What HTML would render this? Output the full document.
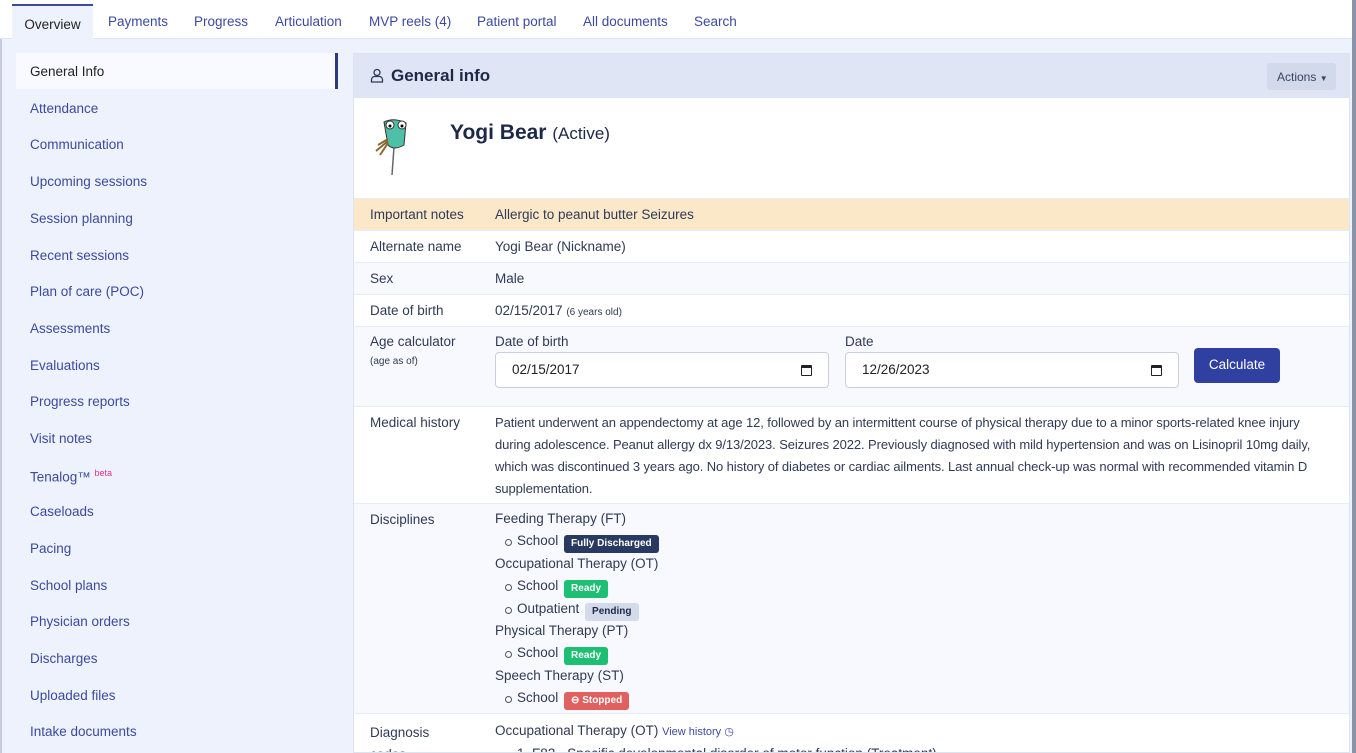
<!DOCTYPE html>
<html><head><meta charset="utf-8"><style>
*{box-sizing:border-box;margin:0;padding:0}
html,body{width:1356px;height:753px;overflow:hidden}
body{background:#edf2fc;font-family:"Liberation Sans",sans-serif;color:#2f3a55;font-size:14px;position:relative}
.topbar{position:absolute;left:0;top:0;width:1356px;height:39px;background:#fff;border-bottom:1px solid #dfe5f2}
.tab{position:absolute;top:14px;font-size:13.5px;color:#3b4aa0}
.tab.act{top:4px;left:12px;width:81px;height:36px;background:#edf2fc;border-top:2px solid #3b4aa0;color:#222;padding-top:11px;text-align:center}
.side{position:absolute;left:0;top:39px;width:340px;height:714px;border-left:2px solid #c6cbe0}
.si{position:absolute;left:30px;font-size:13.5px;color:#3b4aa0}
.siact{position:absolute;left:16px;top:53px;width:322px;height:36px;background:#f8faff;border-right:3px solid #2e3a7e}
.card{position:absolute;left:353px;top:53px;width:997px;height:700px;background:#fff;border:1px solid #dde3f0;overflow:hidden}
.hdr{position:absolute;left:0;top:0;width:100%;height:44px;background:#dfe5f5}
.row{position:absolute;left:0;width:100%;border-top:1px solid #e6ebf5}
.lbl{position:absolute;left:16px;font-size:13.5px;color:#2f3a55}
.val{position:absolute;left:141px;font-size:13.5px;color:#2f3a55}
.badge{display:inline-block;font-size:10px;line-height:14px;font-weight:bold;color:#fff;padding:2px 7px;border-radius:3px;vertical-align:-1px;margin-left:2px}
.li{position:relative;padding-left:22px;height:22.4px;line-height:22px}
.li:before{content:"";position:absolute;left:10px;top:9px;width:5px;height:5px;border:1px solid #555;border-radius:50%}
.inp{position:absolute;height:36px;border:1px solid #c9cfe0;border-radius:4px;background:#fff;font-size:13.5px;padding:9px 16px;color:#222}
.cal{position:absolute;right:16px;top:12px;width:11px;height:11px;border:1.5px solid #222;border-top-width:3px;border-radius:1px}
.right{position:absolute;left:1352px;top:0;width:4px;height:753px;background:#8b93a8}
</style></head><body>
<div class="topbar">
<div class="tab act">Overview</div>
<div class="tab" style="left:108px">Payments</div>
<div class="tab" style="left:194px">Progress</div>
<div class="tab" style="left:275px">Articulation</div>
<div class="tab" style="left:369px">MVP reels (4)</div>
<div class="tab" style="left:477px">Patient portal</div>
<div class="tab" style="left:583px">All documents</div>
<div class="tab" style="left:694px">Search</div>
</div>
<div class="side"></div>
<div class="siact"></div>
<div class="si" style="top:64px;color:#222">General Info</div>
<div class="si" style="top:101px">Attendance</div>
<div class="si" style="top:137px">Communication</div>
<div class="si" style="top:174px">Upcoming sessions</div>
<div class="si" style="top:211px">Session planning</div>
<div class="si" style="top:248px">Recent sessions</div>
<div class="si" style="top:284px">Plan of care (POC)</div>
<div class="si" style="top:321px">Assessments</div>
<div class="si" style="top:358px">Evaluations</div>
<div class="si" style="top:394px">Progress reports</div>
<div class="si" style="top:431px">Visit notes</div>
<div class="si" style="top:468px">Tenalog™ <sup style="color:#e0338a;font-size:9px">beta</sup></div>
<div class="si" style="top:504px">Caseloads</div>
<div class="si" style="top:541px">Pacing</div>
<div class="si" style="top:578px">School plans</div>
<div class="si" style="top:614px">Physician orders</div>
<div class="si" style="top:651px">Discharges</div>
<div class="si" style="top:688px">Uploaded files</div>
<div class="si" style="top:724px">Intake documents</div>

<div class="card">
<div class="hdr">
<svg style="position:absolute;left:16px;top:14px" width="14" height="15" viewBox="0 0 14 15" fill="none" stroke="#2f3a55" stroke-width="1.3"><circle cx="7" cy="4.5" r="3"/><path d="M1.5 14v-2.5c0-1.5 1.5-3 3-3h5c1.5 0 3 1.5 3 3V14z"/></svg>
<div style="position:absolute;left:37px;top:12px;font-size:17px;font-weight:bold;color:#1e2848">General info</div>
<div style="position:absolute;left:913px;top:9px;width:69px;height:27px;background:#d2d9ea;border-radius:3px;font-size:12px;color:#3a4560;padding:7px 0 0 10px">Actions <span style="font-size:8px">▼</span></div>
</div>
<svg style="position:absolute;left:20px;top:63px" width="40" height="60" viewBox="0 0 40 60"><path d="M10 5 Q20 0 32 6 L30 28 Q20 34 14 28z" fill="#4fc0a8" stroke="#333"/><circle cx="16" cy="8" r="4" fill="#fff" stroke="#333"/><circle cx="28" cy="8" r="4" fill="#fff" stroke="#333"/><circle cx="16" cy="9" r="1.5" fill="#000"/><circle cx="28" cy="9" r="1.5" fill="#000"/><path d="M20 30 L18 58" stroke="#666" stroke-width="1.5"/><path d="M14 22 L4 28 M14 24 L2 34 M14 26 L6 38" stroke="#8a6a30" stroke-width="2"/></svg>
<div style="position:absolute;left:96px;top:67px;font-size:21px;font-weight:bold;color:#1e2848">Yogi Bear <span style="font-size:17px;font-weight:normal">(Active)</span></div>

<div class="row" style="top:144px;height:32px;background:#fbe8c9"><div class="lbl" style="top:8px">Important notes</div><div class="val" style="top:8px">Allergic to peanut butter Seizures</div></div>
<div class="row" style="top:176px;height:32px"><div class="lbl" style="top:8px">Alternate name</div><div class="val" style="top:8px">Yogi Bear (Nickname)</div></div>
<div class="row" style="top:208px;height:32px;background:#f8f9fe"><div class="lbl" style="top:8px">Sex</div><div class="val" style="top:8px">Male</div></div>
<div class="row" style="top:240px;height:32px"><div class="lbl" style="top:8px">Date of birth</div><div class="val" style="top:8px">02/15/2017 <span style="font-size:10px">(6 years old)</span></div></div>
<div class="row" style="top:272px;height:80px;background:#f8f9fe"><div class="lbl" style="top:7px">Age calculator<br><span style="font-size:10px;line-height:26px">(age as of)</span></div>
<div class="val" style="top:7px">Date of birth</div>
<div class="inp" style="left:141px;top:25px;width:334px">02/15/2017<div class="cal"></div></div>
<div class="val" style="left:491px;top:7px">Date</div>
<div class="inp" style="left:491px;top:25px;width:334px">12/26/2023<div class="cal"></div></div>
<div style="position:absolute;left:840px;top:21px;width:86px;height:35px;background:#2f40a0;border-radius:4px;color:#fff;font-size:13.5px;text-align:center;line-height:34px">Calculate</div>
</div>
<div class="row" style="top:352px;height:97px"><div class="lbl" style="top:8px">Medical history</div><div class="val" style="top:5px;width:835px;line-height:22px;font-size:13px;letter-spacing:-0.1px">Patient underwent an appendectomy at age 12, followed by an intermittent course of physical therapy due to a minor sports-related knee injury during adolescence. Peanut allergy dx 9/13/2023. Seizures 2022. Previously diagnosed with mild hypertension and was on Lisinopril 10mg daily, which was discontinued 3 years ago. No history of diabetes or cardiac ailments. Last annual check-up was normal with recommended vitamin D supplementation.</div></div>
<div class="row" style="top:449px;height:210px;background:#f8f9fe"><div class="lbl" style="top:8px">Disciplines</div>
<div class="val" style="top:4px;line-height:22.4px">
<div>Feeding Therapy (FT)</div>
<div class="li">School <span class="badge" style="background:#283a62">Fully Discharged</span></div>
<div>Occupational Therapy (OT)</div>
<div class="li">School <span class="badge" style="background:#1dbf73">Ready</span></div>
<div class="li">Outpatient <span class="badge" style="background:#d3daea;color:#1e2848">Pending</span></div>
<div>Physical Therapy (PT)</div>
<div class="li">School <span class="badge" style="background:#1dbf73">Ready</span></div>
<div>Speech Therapy (ST)</div>
<div class="li">School <span class="badge" style="background:#e06060">⊖ Stopped</span></div>
</div></div>
<div class="row" style="top:659px;height:45px"><div class="lbl" style="top:8px;line-height:22px">Diagnosis<br>codes</div>
<div class="val" style="top:6px;line-height:22px">Occupational Therapy (OT) <span style="font-size:11px;color:#3b4aa0">View history ◷</span><br><span style="padding-left:22px">1. F82 - Specific developmental disorder of motor function (Treatment)</span></div></div>
</div>
<div class="right"></div>
</body></html>
